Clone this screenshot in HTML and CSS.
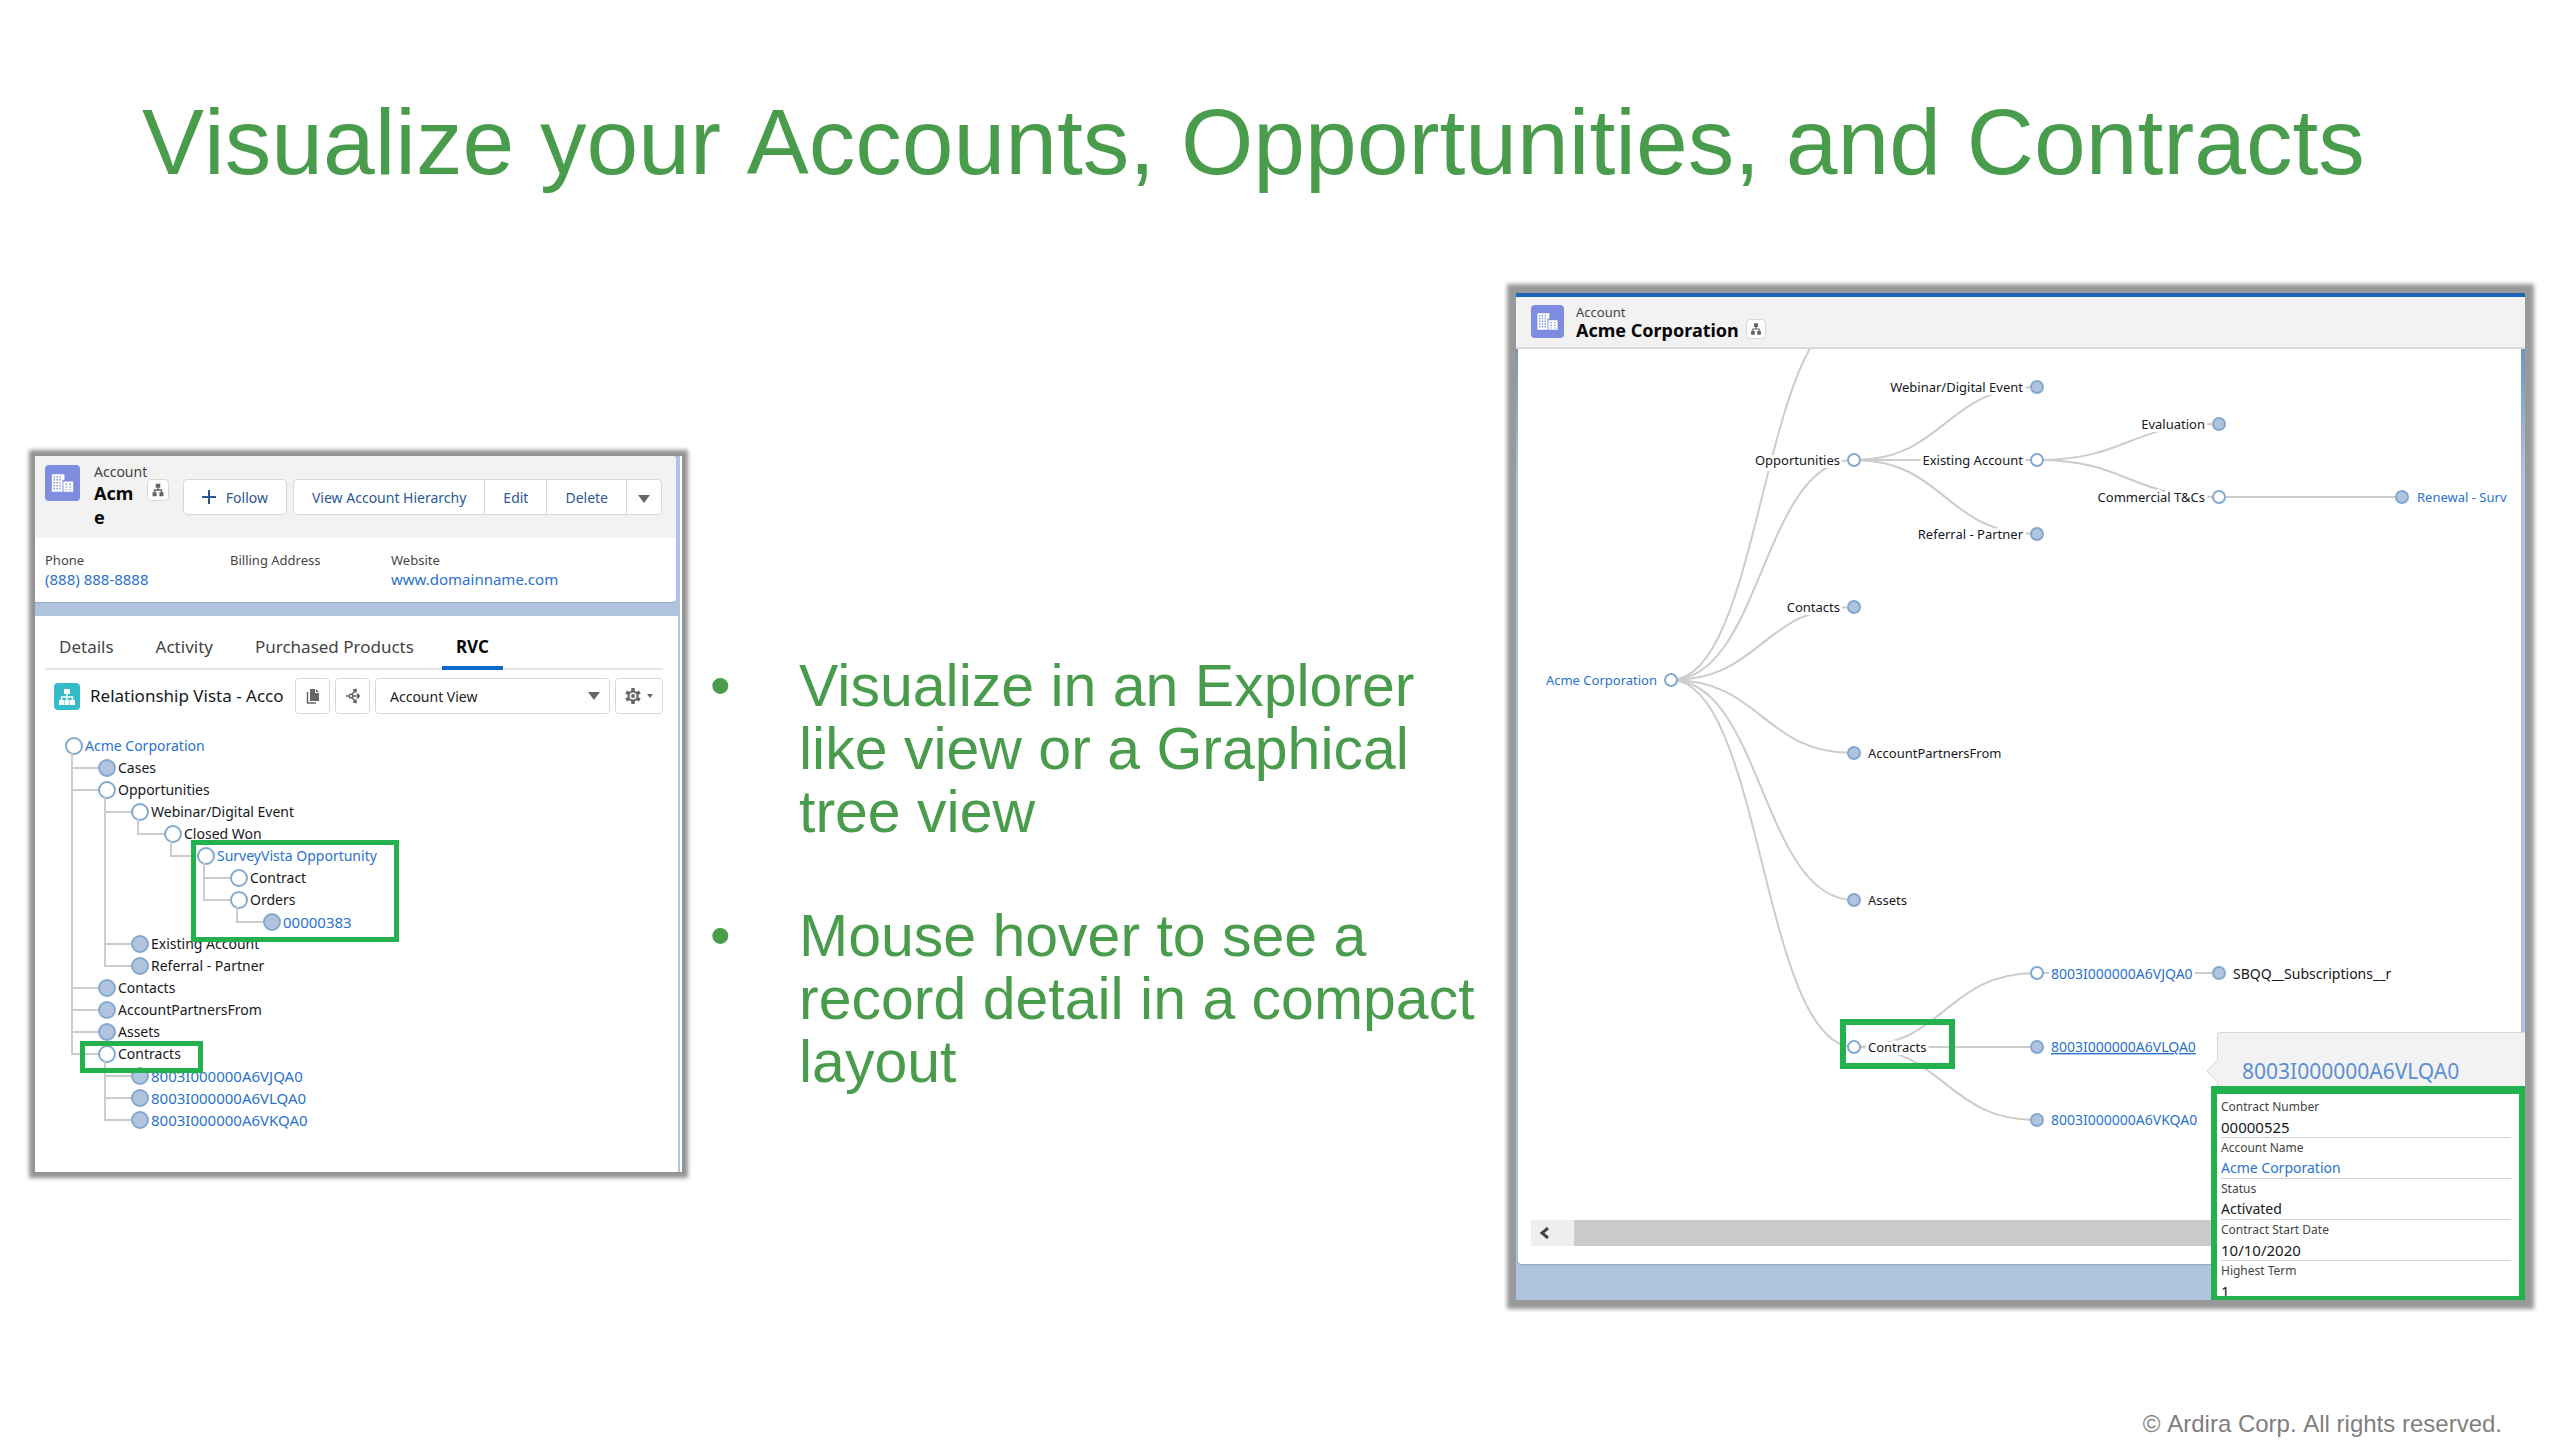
FILE: index.html
```html
<!DOCTYPE html>
<html lang="en">
<head>
  <meta charset="UTF-8" />
  <meta name="viewport" content="width=device-width, initial-scale=1.0" />
  <title>Visualize your Accounts, Opportunities, and Contracts</title>
  <link rel="stylesheet" href="styles.css">
</head>
<body>
  <!-- shared icons -->
  <svg class="sprite" aria-hidden="true">
    <symbol id="building" viewBox="0 0 36 36">
      <path fill="#fff" d="M7 9h13v6h-2v12H7z M19 16.500h10V27H19z" />
      <path stroke="#7f8de1" stroke-width="1.500" stroke-dasharray="1.500 1.500" d="M9.500 11v15M12.500 11v15M15.500 11v15M22 18.500v7M26 18.500v7" />
    </symbol>
    <symbol id="hierarchy" viewBox="0 0 22 22">
      <path fill="currentColor" d="M8.500 4h5v4.500h-5zM5 13.500h4.500V18H5zM12.500 13.500H17V18h-4.500z" />
      <path fill="none" stroke="currentColor" stroke-width="1.500" d="M11 8v3M7.200 14v-3h7.600v3" />
    </symbol>
    <symbol id="down" viewBox="0 0 12 8"><path fill="currentColor" d="M0 0h12L6 8z" /></symbol>
  </svg>

  <h1>Visualize your Accounts, Opportunities, and Contracts</h1>

  <main>
    <section class="panel explorer">
      <div class="page">
        <div class="card record">
          <header class="record-head">
            <svg class="object-icon"><use href="#building" /></svg>
            <div class="record-name">
              <p>Account</p>
              <h2>Acme</h2>
            </div>
            <button class="mini" aria-label="View hierarchy"><svg><use href="#hierarchy" /></svg></button>
            <div class="record-actions">
              <button class="btn follow">
                <svg viewBox="0 0 14 14"><path stroke="currentColor" stroke-width="2" d="M7 0v14M0 7h14" /></svg>
                Follow
              </button>
              <div class="btn-group">
                <button class="btn">View Account Hierarchy</button>
                <button class="btn">Edit</button>
                <button class="btn">Delete</button>
                <button class="btn more" aria-label="More actions"><svg><use href="#down" /></svg></button>
              </div>
            </div>
          </header>
          <dl class="fields">
            <div><dt>Phone</dt><dd><a href="#">(888) 888-8888</a></dd></div>
            <div><dt>Billing Address</dt><dd></dd></div>
            <div><dt>Website</dt><dd><a href="#">www.domainname.com</a></dd></div>
          </dl>
        </div>

        <div class="card related">
          <nav class="tabs">
            <a href="#">Details</a>
            <a href="#">Activity</a>
            <a href="#">Purchased Products</a>
            <a href="#" class="active">RVC</a>
          </nav>
          <div class="toolbar">
            <svg class="vista-icon" viewBox="0 0 26 27">
              <path fill="#fff" d="M10 6h6v5h-6zM5 17h5v5H5zM10.500 17h5v5h-5zM16 17h5v5h-5z" />
              <path fill="none" stroke="#fff" stroke-width="1.500" d="M13 10v8M7.500 18v-4h11v4" />
            </svg>
            <h3>Relationship Vista - Acco</h3>
            <button class="tool" aria-label="Copy">
              <svg viewBox="0 0 16 16"><path fill="currentColor" d="M5 1h5v4h4v8H5z M11 1l3 3h-3z" /><path fill="none" stroke="currentColor" stroke-width="1.500" d="M2.500 4v11H11" /></svg>
            </button>
            <button class="tool" aria-label="Tree view">
              <svg viewBox="0 0 16 16"><g fill="none" stroke="currentColor" stroke-width="1.500"><circle cx="6" cy="8" r="1.800" /><path d="M1 8h3M8 8h6M7 6.500l3.500-4M7 9.500l3.500 4M12 5.500L14.500 8 12 10.500M8 2.200l3-.7v3M8 13.800l3 .7v-3" /></g></svg>
            </button>
            <div class="select">
              <select aria-label="View">
                <option>Account View</option>
              </select>
              <svg><use href="#down" /></svg>
            </div>
            <button class="tool settings" aria-label="Settings">
              <svg class="gear" viewBox="0 0 16 16"><circle cx="8" cy="8" r="4.500" fill="none" stroke="currentColor" stroke-width="2" /><circle cx="8" cy="8" r="2" fill="currentColor" /><path stroke="currentColor" stroke-width="3.500" d="M8 0v3M8 13v3M1.200 4l2.500 1.500M12.300 10.500l2.500 1.500M1.200 12l2.500-1.500M12.300 5.500L14.800 4" /></svg>
              <svg class="caret"><use href="#down" /></svg>
            </button>
          </div>

          <ul class="tree">
            <li><div class="node open"><a href="#">Acme Corporation</a></div>
              <ul>
                <li><div class="node">Cases</div></li>
                <li><div class="node open">Opportunities</div>
                  <ul>
                    <li><div class="node open">Webinar/Digital Event</div>
                      <ul>
                        <li><div class="node open">Closed Won</div>
                          <ul>
                            <li><div class="node open"><a href="#">SurveyVista Opportunity</a></div>
                              <ul>
                                <li><div class="node open">Contract</div></li>
                                <li><div class="node open">Orders</div>
                                  <ul>
                                    <li><div class="node"><a href="#" class="id">00000383</a></div></li>
                                  </ul>
                                </li>
                              </ul>
                              <span class="mark mark-opportunity"></span>
                            </li>
                          </ul>
                        </li>
                      </ul>
                    </li>
                    <li><div class="node">Existing Account</div></li>
                    <li><div class="node">Referral - Partner</div></li>
                  </ul>
                </li>
                <li><div class="node">Contacts</div></li>
                <li><div class="node">AccountPartnersFrom</div></li>
                <li><div class="node">Assets</div></li>
                <li><div class="node open">Contracts</div>
                  <ul>
                    <li><div class="node"><a href="#" class="id">8003I000000A6VJQA0</a></div></li>
                    <li><div class="node"><a href="#" class="id">8003I000000A6VLQA0</a></div></li>
                    <li><div class="node"><a href="#" class="id">8003I000000A6VKQA0</a></div></li>
                  </ul>
                  <span class="mark mark-contracts"></span>
                </li>
              </ul>
            </li>
          </ul>
        </div>
      </div>
    </section>

    <ul class="points">
      <li>Visualize in an Explorer like view or a Graphical tree view</li>
      <li>Mouse hover to see a record detail in a compact layout</li>
    </ul>

    <section class="panel graph">
      <header class="graph-head">
        <svg class="object-icon"><use href="#building" /></svg>
        <div class="record-name">
          <p>Account</p>
          <h2>Acme Corporation</h2>
        </div>
        <button class="mini" aria-label="View hierarchy"><svg><use href="#hierarchy" /></svg></button>
      </header>
      <div class="backdrop">
        <div class="canvas">
          <svg class="diagram">
            <g class="links">
              <path d="M153 331C244 331 244-36 336-36" />
              <path d="M153 331C244 331 244 111 336 111" />
              <path d="M153 331C244 331 244 258 336 258" />
              <path d="M153 331C244 331 244 404 336 404" />
              <path d="M153 331C244 331 244 551 336 551" />
              <path d="M153 331C244 331 244 698 336 698" />
              <path d="M336 111C427 111 427 38 519 38" />
              <path d="M336 111H519" />
              <path d="M336 111C427 111 427 185 519 185" />
              <path d="M519 111C610 111 610 75 701 75" />
              <path d="M519 111C610 111 610 148 701 148" />
              <path d="M701 148H884" />
              <path d="M336 698C427 698 427 624 519 624" />
              <path d="M336 698H519" />
              <path d="M336 698C427 698 427 771 519 771" />
              <path d="M519 624H701" />
            </g>
            <g class="dots">
              <circle class="open" cx="153" cy="331" r="6" />
              <circle class="open" cx="336" cy="111" r="6" />
              <circle cx="336" cy="258" r="6" />
              <circle cx="336" cy="404" r="6" />
              <circle cx="336" cy="551" r="6" />
              <circle class="open" cx="336" cy="698" r="6" />
              <circle cx="519" cy="38" r="6" />
              <circle class="open" cx="519" cy="111" r="6" />
              <circle cx="519" cy="185" r="6" />
              <circle cx="701" cy="75" r="6" />
              <circle class="open" cx="701" cy="148" r="6" />
              <circle cx="884" cy="148" r="6" />
              <circle class="open" cx="519" cy="624" r="6" />
              <circle cx="519" cy="698" r="6" />
              <circle cx="519" cy="771" r="6" />
              <circle cx="701" cy="624" r="6" />
            </g>
            <g class="labels before">
              <a href="#"><text x="139" y="336">Acme Corporation</text></a>
              <text x="322" y="116">Opportunities</text>
              <text x="322" y="263">Contacts</text>
              <text x="505" y="43">Webinar/Digital Event</text>
              <text x="505" y="116">Existing Account</text>
              <text x="505" y="190">Referral - Partner</text>
              <text x="687" y="80">Evaluation</text>
              <text x="687" y="153">Commercial T&amp;Cs</text>
            </g>
            <g class="labels">
              <text x="350" y="409">AccountPartnersFrom</text>
              <text x="350" y="556">Assets</text>
              <text x="350" y="703">Contracts</text>
              <a href="#"><text x="899" y="153">Renewal - Surv</text></a>
              <a href="#"><text class="id" x="533" y="630">8003I000000A6VJQA0</text></a>
              <a href="#"><text class="id hover" x="533" y="703">8003I000000A6VLQA0</text></a>
              <a href="#"><text class="id" x="533" y="776">8003I000000A6VKQA0</text></a>
              <text class="id" x="715" y="630">SBQQ__Subscriptions__r</text>
            </g>
            <rect class="mark-node" x="325" y="673" width="109" height="44" />
          </svg>
          <div class="scrollbar">
            <button aria-label="Scroll left"><svg viewBox="0 0 10 12"><path fill="none" stroke="#444" stroke-width="3" d="M9 1L3 6l6 5" /></svg></button>
            <div class="thumb"></div>
          </div>
        </div>
      </div>

      <aside class="popover">
        <header>
          <svg class="nubbin" viewBox="0 0 12 26"><path fill="#f3f2f2" stroke="#d8d8d8" d="M12.500 0.500L1 13l11.500 12.500" /></svg>
          <a href="#">8003I000000A6VLQA0</a>
        </header>
        <dl>
          <div><dt>Contract Number</dt><dd class="num">00000525</dd></div>
          <div><dt>Account Name</dt><dd><a href="#">Acme Corporation</a></dd></div>
          <div><dt>Status</dt><dd>Activated</dd></div>
          <div><dt>Contract Start Date</dt><dd class="num">10/10/2020</dd></div>
          <div><dt>Highest Term</dt><dd class="num">1</dd></div>
        </dl>
      </aside>
    </section>
  </main>

  <footer>© Ardira Corp. All rights reserved.</footer>
</body>
</html>
```

FILE: styles.css
```css
:root {
  --green: #4a9c4d;
  --mark: #22b14c;
  --link: #2a72cc;
  --sky: #b0c4de;
  --line: #ccc;
  --head: #f3f2f2;
  --ring: #83a9cf;
}
* { box-sizing: border-box; }
body {
  margin: 0; min-height: 100vh; padding: 90px 35px 2px;
  display: flex; flex-direction: column;
  background: #fff; color: #16181d;
  font-family: "Noto Sans", "Open Sans", sans-serif; font-size: 14px;
}
h1, h2, h3, p, ul, dl, dd { margin: 0; padding: 0; }
ul { list-style: none; }
a { color: var(--link); text-decoration: none; }
button, select { font: inherit; cursor: pointer; }
.sprite { position: absolute; width: 0; height: 0; }

h1 {
  padding-left: 107px; color: var(--green);
  font: 93px/104px "Liberation Sans", Arial, sans-serif;
  font-kerning: none;
}
main {
  display: grid; align-items: start; margin-top: 99px;
  grid-template-columns: minmax(0, 647fr) minmax(0, 834fr) minmax(0, 1009fr);
}
footer {
  margin-top: auto; padding-right: 23px; text-align: right; color: #7f7f7f;
  font: 24px/28px "Liberation Sans", Arial, sans-serif;
  font-kerning: none;
}

/* bullet points */
.points {
  margin-top: 362px; padding: 0 20px 0 28px; color: var(--green);
  font: 59px/63px "Liberation Sans", Arial, sans-serif;
}
.points li { display: flex; margin-bottom: 61px; }
.points li::before { content: "•"; flex: 0 0 89px; }

/* panels */
.panel { position: relative; background: #fff; }
.explorer { margin-top: 163px; padding-right: 2px; box-shadow: 0 0 4px 6px #939393; }
.graph { box-shadow: 0 0 4px 9px #999; }
.page { background: var(--sky); }
.card { background: #fff; }
.record { margin-right: 4px; border-radius: 0 4px 4px 0; box-shadow: 0 1px 1px #93a7c4; overflow: hidden; }
.related { margin: 14px 2px 0 0; padding: 19px 0 41px; }

.record-head {
  display: flex; align-items: flex-start; height: 82px;
  padding: 7px 14px 0 10px; background: var(--head);
}
.object-icon { width: 35px; height: 36px; margin-top: 2px; border-radius: 4px; background: #7f8de1; flex: none; }
.record-name p { font-size: 14px; line-height: 18px; color: #444; }
.record-name h2 { font-size: 18px; line-height: 24px; color: #080707; }
.record-head .record-name { width: 46px; margin: 0 7px 0 14px; word-break: break-all; }
.record-head .record-name p { white-space: nowrap; }
.mini {
  width: 22px; height: 22px; padding: 0; border: 1px solid #d8d8d8;
  border-radius: 4px; background: #fff; color: #666; flex: none;
}
.mini svg { display: block; width: 100%; height: 100%; }
.record-head .mini, .record-actions { margin-top: 16px; }
.record-actions { display: flex; gap: 6px; margin-left: auto; }
.btn {
  height: 36px; padding: 0 18px; border: 1px solid #d8d8d8; border-radius: 4px;
  background: #fff; color: #2b5796; white-space: nowrap;
}
.follow { display: flex; align-items: center; gap: 10px; }
.follow svg { width: 14px; height: 14px; }
.btn-group { display: flex; }
.btn-group .btn { border-radius: 0; margin-left: -1px; }
.btn-group .btn:first-child { border-radius: 4px 0 0 4px; margin-left: 0; }
.btn-group .btn:last-child { border-radius: 0 4px 4px 0; }
.btn-group .more { padding: 0 11px; color: #666; }
.more svg { width: 12px; height: 8px; }

.fields { display: grid; grid-template-columns: 185px 161px 1fr; padding: 13px 10px; }
.fields dt { font-size: 13px; line-height: 18px; color: #444; }
.fields dd { font-size: 15px; line-height: 20px; }

.tabs { display: flex; gap: 14px; margin: 0 15px 0 10px; box-shadow: inset 0 -2px #e5e5e5; }
.tabs a {
  padding: 0 14px 7px; border-bottom: 4px solid transparent;
  color: #444; font-size: 17px; line-height: 24px;
}
.tabs .active { color: #080707; font-weight: bold; border-color: #0f69c9; }

.toolbar { display: flex; align-items: center; gap: 5px; margin: 8px 15px 0 19px; }
.vista-icon { width: 26px; height: 27px; margin-right: 5px; border-radius: 4px; background: #35bccb; flex: none; }
.toolbar h3 { flex: 1; font-size: 17px; font-weight: normal; line-height: 24px; white-space: nowrap; overflow: hidden; }
.tool {
  display: flex; align-items: center; justify-content: center; gap: 6px;
  width: 35px; height: 36px; padding: 0; flex: none;
  border: 1px solid #d8d8d8; border-radius: 4px; background: #fff; color: #666;
}
.tool svg { width: 16px; height: 16px; }
.settings { width: 48px; }
.settings .caret { width: 6px; height: 4px; }
.select { position: relative; width: 235px; }
.select select {
  appearance: none; width: 100%; height: 36px; padding: 0 14px;
  border: 1px solid #d8d8d8; border-radius: 4px; background: #fff; color: #222;
}
.select svg { position: absolute; right: 10px; top: 14px; width: 12px; height: 8px; color: #666; pointer-events: none; }

/* explorer tree */
.tree { margin: 21px 0 0 30px; }
.tree ul { margin-left: 33px; }
.tree li { position: relative; }
.node { display: flex; align-items: center; gap: 2px; height: 22px; line-height: 22px; white-space: nowrap; }
.node::before {
  content: ""; width: 14px; height: 14px; border-radius: 50%;
  border: 2px solid var(--ring); background: var(--sky);
}
.node.open::before { background: #fff; }
.tree .id { font-size: 15px; }
.tree ul > li::before {
  content: ""; position: absolute; left: -27px; top: 10px; width: 27px; height: 2px; background: var(--line);
}
.tree ul > li::after {
  content: ""; position: absolute; left: -27px; top: -4px; bottom: 0; width: 2px; background: var(--line);
}
.tree ul > li:last-child::after { bottom: auto; height: 16px; }
.mark { position: absolute; z-index: 1; border: 5px solid var(--mark); }
.mark-opportunity { left: -6px; top: -5px; width: 208px; height: 102px; }
.mark-contracts { left: -18px; top: -2px; width: 123px; height: 32px; }

/* graph */
.graph-head {
  display: flex; align-items: flex-start; height: 56px; padding: 6px 15px 0;
  border-top: 4px solid #1b66b8; border-bottom: 2px solid #dcdcdc; background: var(--head);
}
.graph-head .object-icon { width: 33px; height: 33px; }
.graph-head .record-name { margin: 0 7px 0 12px; }
.graph-head .record-name p { font-size: 13px; }
.graph-head .record-name h2 { line-height: 18px; }
.graph-head .mini { width: 20px; height: 20px; margin-top: 16px; }
.backdrop {
  padding: 0 4px 36px 2px;
  background: linear-gradient(#6f94bd, var(--sky) 120px);
}
.canvas { background: #fff; padding-bottom: 18px; border-radius: 0 0 4px 4px; box-shadow: 0 1px 2px #8a9fbe; }
.diagram { display: block; width: 100%; height: 871px; overflow: hidden; }
.links { fill: none; stroke: var(--line); stroke-width: 2; }
.dots circle { fill: var(--sky); stroke: var(--ring); stroke-width: 2; }
.dots .open { fill: #fff; }
.labels text { font-size: 13px; fill: #16181d; stroke: #fff; stroke-width: 6; paint-order: stroke; }
.labels a text { fill: var(--link); }
.labels .id { font-size: 14px; }
.labels .hover { stroke: none; text-decoration: underline; }
.before { text-anchor: end; }
.mark-node { fill: none; stroke: var(--mark); stroke-width: 6; }
.scrollbar { display: flex; height: 26px; margin-left: 13px; background: #eee; }
.scrollbar button { width: 43px; padding: 0 0 0 8px; border: 0; background: none; text-align: left; }
.scrollbar button svg { display: block; width: 10px; height: 12px; }
.thumb { flex: 1; background: #cbcbcb; }

/* record detail on hover */
.popover { position: absolute; right: 0; bottom: 0; width: 314px; }
.popover header {
  position: relative; height: 54px; margin-left: 6px; padding: 24px 0 0 24px;
  border: 1px solid #d8d8d8; border-width: 1px 0 0 1px; border-radius: 4px 0 0; background: var(--head);
}
.popover header a { display: block; font-size: 21px; line-height: 28px; color: #5a8fd6; }
.nubbin { position: absolute; left: -12px; top: 25px; width: 12px; height: 26px; }
.popover dl {
  height: 214px; padding: 3px 8px 0 4px; overflow: hidden; background: #fff;
  border: solid var(--mark); border-width: 8px 6px 4px;
}
.popover dl div { border-bottom: 1px solid #d4d4d4; }
.popover dt { font-size: 12px; line-height: 20px; color: #444; }
.popover dd { font-size: 14px; line-height: 20px; }
.popover .num { font-size: 15px; }
```
